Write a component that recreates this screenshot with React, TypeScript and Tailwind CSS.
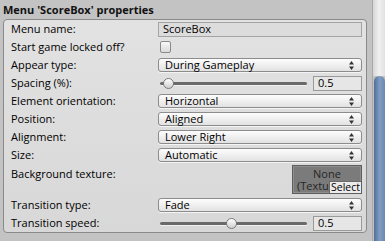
import React from 'react';

const font = "font-['Lucida_Grande','Open_Sans',sans-serif]";

const Arrows: React.FC = () => (
  <svg width="5" height="9" viewBox="0 0 5 9" className="shrink-0">
    <path d="M2.5 0 L5 3.5 L0 3.5 Z" fill="#333" />
    <path d="M0 5.5 L5 5.5 L2.5 9 Z" fill="#333" />
  </svg>
);

const Dropdown: React.FC<{ value: string }> = ({ value }) => (
  <div className="flex h-[14px] w-full items-center justify-between rounded-[3px] border border-[#8c8c8c] bg-gradient-to-b from-[#fdfdfd] to-[#e2e2e2] pl-[6px] pr-[7px] shadow-[0_1px_0_#f4f4f4]">
    <span className="text-[11px] leading-[12px] text-black">{value}</span>
    <Arrows />
  </div>
);

const ValueField: React.FC<{ value: string }> = ({ value }) => (
  <div className="flex h-[15px] w-[49px] shrink-0 items-center border border-[#9a9a9a] bg-[#e6e6e6] pl-[4px] text-[11px] leading-[12px] text-black">
    {value}
  </div>
);

const Slider: React.FC<{ knob: number; value: string }> = ({ knob, value }) => (
  <div className="flex w-full items-center gap-[6px]">
    <div className="relative h-[13px] flex-1">
      <div className="absolute left-[2px] right-0 top-[5px] h-[3px] rounded-full bg-[#6a6a6a] shadow-[0_1px_0_#f0f0f0]" />
      <div
        className="absolute top-[1px] h-[11px] w-[11px] rounded-full border border-[#7a7a7a] bg-gradient-to-b from-[#ffffff] to-[#d0d0d0]"
        style={{ left: knob }}
      />
    </div>
    <ValueField value={value} />
  </div>
);

const Row: React.FC<{ label: string; children?: React.ReactNode }> = ({ label, children }) => (
  <div className="flex h-[18px] items-center">
    <div className="w-[147px] shrink-0 text-[11px] leading-[14px] text-black">{label}</div>
    <div className="flex w-[204px] items-center">{children}</div>
  </div>
);

const App: React.FC = () => {
  return (
    <div className={`flex h-[241px] w-[385px] overflow-hidden bg-[#c3c3c3] ${font}`}>
      <div className="flex w-[372px] shrink-0 flex-col">
        <div className="flex h-[19px] items-center pl-[3px] text-[11px] font-bold leading-[14px] text-[#111]">
          Menu 'ScoreBox' properties
        </div>
        <div className="ml-[3px] h-[214px] w-[364px] rounded-[4px] border border-[#8a8a8a] bg-gradient-to-b from-[#e2e2e2] to-[#d8d8d8] pl-[7px]">
          <Row label="Menu name:">
            <div className="flex h-[15px] w-full items-center border border-[#a4a4a4] bg-[#dcdcdc] pl-[4px] text-[11px] leading-[12px] text-black">
              ScoreBox
            </div>
          </Row>
          <Row label="Start game locked off?">
            <div className="ml-[2px] h-[12px] w-[11px] rounded-[2px] border border-[#8a8a8a] bg-gradient-to-b from-[#f8f8f8] to-[#dadada]" />
          </Row>
          <Row label="Appear type:">
            <Dropdown value="During Gameplay" />
          </Row>
          <Row label="Spacing (%):">
            <Slider knob={5} value="0.5" />
          </Row>
          <Row label="Element orientation:">
            <Dropdown value="Horizontal" />
          </Row>
          <Row label="Position:">
            <Dropdown value="Aligned" />
          </Row>
          <Row label="Alignment:">
            <Dropdown value="Lower Right" />
          </Row>
          <Row label="Size:">
            <Dropdown value="Automatic" />
          </Row>
          <div className="flex h-[32px]">
            <div className="w-[147px] shrink-0 pt-[3px] text-[11px] leading-[14px] text-black">Background texture:</div>
            <div className="flex w-[204px] justify-end pt-[1px]">
              <div className="relative flex h-[29px] w-[70px] flex-col items-center justify-center border border-[#5e5e5e] bg-[#7b7b7b] text-[11px] leading-[12px] text-[#262626] shadow-[inset_0_0_0_1px_#8e8e8e]">
                <span>None</span>
                <span>(Texture2D)</span>
                <div className="absolute bottom-0 right-0 flex h-[12px] w-[32px] items-center justify-center border-l border-t border-[#6a6a6a] bg-[#ececec] text-[10.5px] leading-[11px] text-black">
                  Select
                </div>
              </div>
            </div>
          </div>
          <Row label="Transition type:">
            <Dropdown value="Fade" />
          </Row>
          <Row label="Transition speed:">
            <Slider knob={68} value="0.5" />
          </Row>
        </div>
      </div>
      <div className="flex w-[13px] flex-col border-l border-[#a8a8a8]">
        <div className="h-[76px] bg-gradient-to-r from-[#d6d6d6] via-[#f0f0f0] to-[#e2e2e2]" />
        <div className="ml-[1px] flex-1 rounded-t-[6px] bg-gradient-to-r from-[#4f6f98] via-[#7f9cc2] to-[#6c88ae]" />
      </div>
    </div>
  );
};

export default App;
